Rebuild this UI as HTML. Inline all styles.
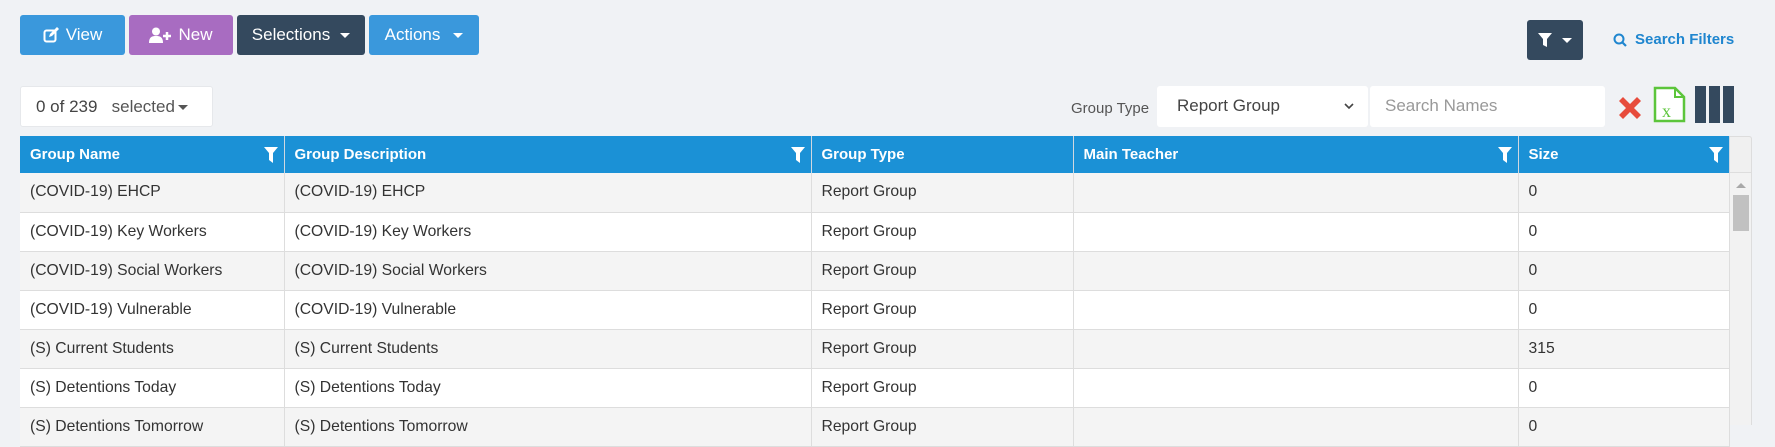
<!DOCTYPE html>
<html><head><meta charset="utf-8"><style>
*{box-sizing:border-box;margin:0;padding:0}
body{width:1775px;height:425px;overflow:hidden;background:#f0f2f5;font-family:"Liberation Sans",Arial,sans-serif;position:relative}
.btn{position:absolute;top:15px;height:40px;border-radius:3px;color:#fff;font-size:17px;display:flex;align-items:center;justify-content:center;gap:7px}
.caret{display:inline-block;width:0;height:0;border-left:5px solid transparent;border-right:5px solid transparent;border-top:5px solid currentColor;margin-left:3px}
.abs{position:absolute}
table{border-collapse:collapse;table-layout:fixed;position:absolute;left:20px;top:136px;width:1709px}
th{background:#1b91d6;color:#fff;font-size:15px;font-weight:bold;text-align:left;height:37px;padding:0 10px;border-right:1px solid #d0d8e0;position:relative}
td{height:39px;font-size:15.7px;color:#333;padding:0 10px;border-right:1px solid #ddd;border-bottom:1px solid #ddd;white-space:nowrap}
tr:nth-child(odd) td{background:#fff}
tr:nth-child(even) td{background:#f4f4f4}
.fi{position:absolute;right:6px;top:11px}
</style></head><body>
<div class="btn" style="left:20px;width:105px;background:#3a98dc"><svg width="16" height="16" viewBox="0 0 16 16"><rect x="1.5" y="3.5" width="11" height="11" rx="2" fill="none" stroke="#fff" stroke-width="2"/><path d="M6 10l1-3 7-7 2 2-7 7z" fill="#fff"/></svg>View</div>
<div class="btn" style="left:129px;width:104px;background:#a86cc1"><svg width="22" height="16" viewBox="0 0 22 16"><circle cx="7" cy="4.5" r="4" fill="#fff"/><path d="M0 16c0-6 3-7 7-7s7 1 7 7z" fill="#fff"/><path d="M14 9h8M18 5v8" stroke="#fff" stroke-width="2.5"/></svg>New</div>
<div class="btn" style="left:237px;width:128px;background:#34495e">Selections<span class="caret"></span></div>
<div class="btn" style="left:369px;width:110px;background:#3a98dc">Actions <span class="caret" style="margin-left:6px"></span></div>

<div class="abs" style="left:1527px;top:20px;width:56px;height:40px;background:#34495e;border-radius:3px;display:flex;align-items:center;justify-content:center;gap:10px;color:#fff"><svg width="14" height="14" viewBox="0 0 14 14"><path d="M0 0h14L9 6v8L5 12V6z" fill="#fff"/></svg><span class="caret" style="margin:0"></span></div>
<div class="abs" style="left:1613px;top:31px;color:#1f86cf;font-size:15px;font-weight:bold;display:flex;align-items:center;gap:8px"><svg width="14" height="14" viewBox="0 0 14 14"><circle cx="6" cy="6" r="4.5" fill="none" stroke="#1f86cf" stroke-width="2"/><path d="M9 9l4 4" stroke="#1f86cf" stroke-width="2.2"/></svg>Search Filters</div>

<div class="abs" style="left:20px;top:86px;width:193px;height:41px;background:#fff;border:1px solid #e6e8eb;border-radius:3px;font-size:17px;color:#555;padding:10px 0 0 15px"><span style="color:#444">0 of 239</span>&nbsp;&nbsp;&nbsp;selected<span class="caret" style="margin-left:3px;vertical-align:middle"></span></div>

<div class="abs" style="left:1071px;top:100px;font-size:15px;color:#555">Group Type</div>
<div class="abs" style="left:1157px;top:86px;width:211px;height:41px;background:#fff;border-radius:3px;font-size:17px;color:#444;padding:10px 0 0 20px">Report Group<svg class="abs" style="left:187px;top:17px" width="10" height="7" viewBox="0 0 10 7"><path d="M1 1l4 4 4-4" fill="none" stroke="#444" stroke-width="1.6"/></svg></div>
<div class="abs" style="left:1370px;top:86px;width:235px;height:41px;background:#fff;border-radius:3px;font-size:17px;color:#999;padding:10px 0 0 15px">Search Names</div>
<svg class="abs" style="left:1615px;top:93px" width="30" height="30" viewBox="0 0 30 30"><path d="M4 8l4-4 7 7 7-7 4 4-7 7 7 7-4 4-7-7-7 7-4-4 7-7z" fill="#e74c3c"/></svg>
<svg class="abs" style="left:1653px;top:86px" width="33" height="37" viewBox="0 0 33 37"><path d="M2 2h20l9 9v24H2z" fill="#fff" stroke="#5cc53b" stroke-width="2.5"/><path d="M22 2v9h9" fill="none" stroke="#5cc53b" stroke-width="2"/><text x="9" y="31" font-family="Liberation Serif" font-size="18" fill="#5cc53b">x</text></svg>
<div class="abs" style="left:1695px;top:86px;width:39px;height:37px;display:flex;gap:3px"><div style="flex:1;background:#34495e"></div><div style="flex:1;background:#34495e"></div><div style="flex:1;background:#34495e"></div></div>

<div class="abs" style="left:1728px;top:136px;width:24px;height:289px;background:#f2f2f2;border:1px solid #ddd;border-bottom:none;border-radius:0 3px 0 0"></div>
<div class="abs" style="left:1728px;top:136px;width:24px;height:37px;background:#f0f0f0;border:1px solid #ddd;border-radius:0 3px 0 0"></div>
<div class="abs" style="left:1736px;top:183px;width:0;height:0;border-left:5px solid transparent;border-right:5px solid transparent;border-bottom:5px solid #a8a8a8"></div>
<div class="abs" style="left:1733px;top:195px;width:16px;height:36px;background:#c1c1c1"></div>

<table>
<colgroup><col style="width:264px"><col style="width:527px"><col style="width:262px"><col style="width:445px"><col style="width:211px"></colgroup>
<tr><th>Group Name<svg class="fi" width="14" height="16" viewBox="0 0 14 16"><path d="M0 0h14L9 6v10L5 13V6z" fill="#fff"/></svg></th><th>Group Description<svg class="fi" width="14" height="16" viewBox="0 0 14 16"><path d="M0 0h14L9 6v10L5 13V6z" fill="#fff"/></svg></th><th>Group Type</th><th>Main Teacher<svg class="fi" width="14" height="16" viewBox="0 0 14 16"><path d="M0 0h14L9 6v10L5 13V6z" fill="#fff"/></svg></th><th>Size<svg class="fi" width="14" height="16" viewBox="0 0 14 16"><path d="M0 0h14L9 6v10L5 13V6z" fill="#fff"/></svg></th></tr>
<tr><td>(COVID-19) EHCP</td><td>(COVID-19) EHCP</td><td>Report Group</td><td></td><td>0</td></tr>
<tr><td>(COVID-19) Key Workers</td><td>(COVID-19) Key Workers</td><td>Report Group</td><td></td><td>0</td></tr>
<tr><td>(COVID-19) Social Workers</td><td>(COVID-19) Social Workers</td><td>Report Group</td><td></td><td>0</td></tr>
<tr><td>(COVID-19) Vulnerable</td><td>(COVID-19) Vulnerable</td><td>Report Group</td><td></td><td>0</td></tr>
<tr><td>(S) Current Students</td><td>(S) Current Students</td><td>Report Group</td><td></td><td>315</td></tr>
<tr><td>(S) Detentions Today</td><td>(S) Detentions Today</td><td>Report Group</td><td></td><td>0</td></tr>
<tr><td>(S) Detentions Tomorrow</td><td>(S) Detentions Tomorrow</td><td>Report Group</td><td></td><td>0</td></tr>
</table>
</body></html>
